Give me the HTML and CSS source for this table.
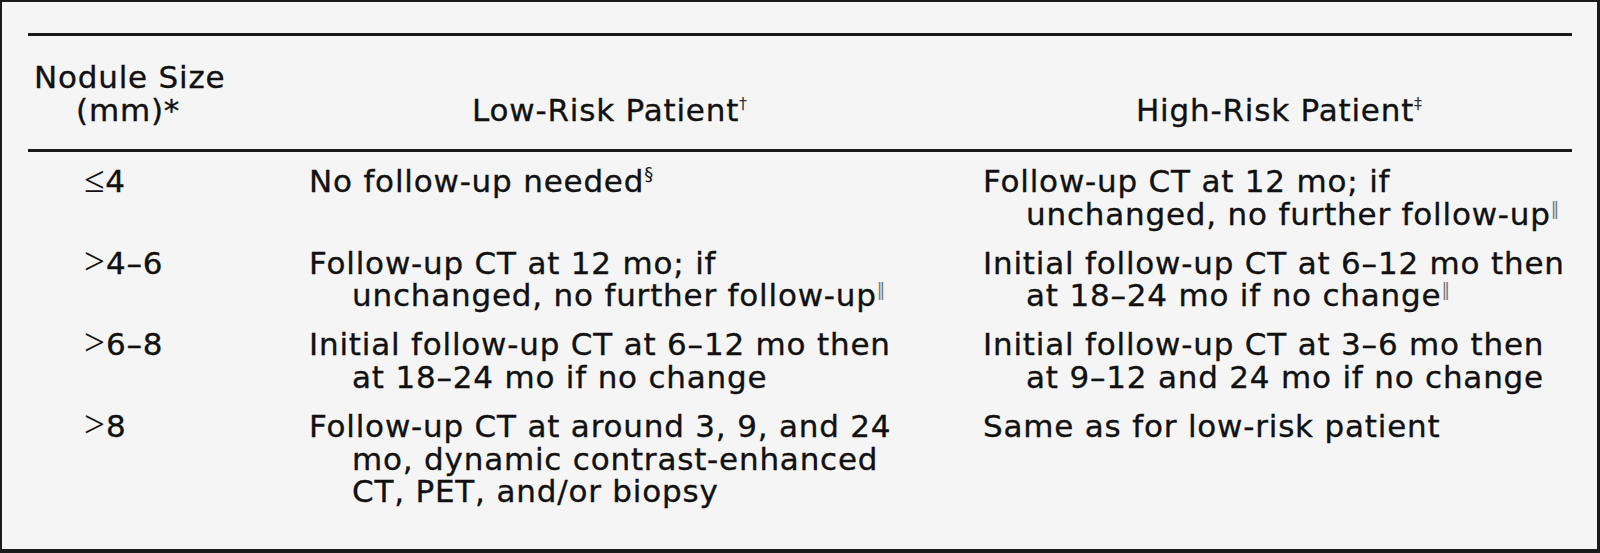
FILE: index.html
```html
<!DOCTYPE html>
<html lang="en">
<head>
<meta charset="utf-8">
<title>Nodule follow-up table</title>
<link rel="stylesheet" href="styles.css">
</head>
<body>
<div class="frame">
  <div class="table">
    <div class="head">
      <div class="cell c1 hang-head">Nodule Size<br>(mm)*</div>
      <div class="cell c2 h2">Low-Risk Patient<sup class="mark">†</sup></div>
      <div class="cell c3 h3">High-Risk Patient<sup class="mark">‡</sup></div>
    </div>
    <div class="body">
      <div class="row">
        <div class="cell size"><span class="sym">≤</span>4</div>
        <div class="cell hang">No follow-up needed<sup class="sect">§</sup></div>
        <div class="cell hang">Follow-up CT at 12 mo; if<br>unchanged, no further follow-up<sup class="bar">‖</sup></div>
      </div>
      <div class="row">
        <div class="cell size"><span class="sym">&gt;</span>4–6</div>
        <div class="cell hang">Follow-up CT at 12 mo; if<br>unchanged, no further follow-up<sup class="bar">‖</sup></div>
        <div class="cell hang">Initial follow-up CT at 6–12 mo then<br>at 18–24 mo if no change<sup class="bar">‖</sup></div>
      </div>
      <div class="row">
        <div class="cell size"><span class="sym">&gt;</span>6–8</div>
        <div class="cell hang">Initial follow-up CT at 6–12 mo then<br>at 18–24 mo if no change</div>
        <div class="cell hang">Initial follow-up CT at 3–6 mo then<br>at 9–12 and 24 mo if no change</div>
      </div>
      <div class="row">
        <div class="cell size"><span class="sym">&gt;</span>8</div>
        <div class="cell hang">Follow-up CT at around 3, 9, and 24<br>mo, dynamic contrast-enhanced<br>CT, PET, and/or biopsy</div>
        <div class="cell hang">Same as for low-risk patient</div>
      </div>
    </div>
  </div>
</div>
</body>
</html>
```

FILE: styles.css
```css
html, body {
  margin: 0;
  padding: 0;
  background: #f5f5f5;
}

.frame {
  width: 1600px;
  height: 553px;
  box-sizing: border-box;
  border-style: solid;
  border-color: #1b1b1b;
  border-width: 2px 3px 4px 2px;
  background: #f5f5f5;
  padding: 31px 25px 0 26px;
  color: #111;
  font-family: "DejaVu Sans", "Liberation Sans", sans-serif;
  font-size: 31px;
  letter-spacing: 0.8px;
  line-height: 32.6px;
  -webkit-text-stroke: 0.35px #111;
}

.head,
.row {
  display: grid;
  grid-template-columns: 281px 674px 1fr;
}

.head {
  align-items: end;
  border-top: 3px solid #1a1a1a;
  border-bottom: 3px solid #1a1a1a;
  padding: 25px 0 23px;
}

.cell {
  white-space: nowrap;
}

.hang-head {
  padding-left: 48px;
  text-indent: -42px;
}

.h2 {
  padding-left: 163px;
}

.h3 {
  padding-left: 153px;
}

.body {
  display: flex;
  flex-direction: column;
  gap: 16.4px;
  padding-top: 13px;
}

.size {
  padding-left: 56px;
}

.sym {
  font-family: "Liberation Serif", "DejaVu Serif", serif;
  font-size: 37px;
  line-height: 0;
  letter-spacing: 1px;
  -webkit-text-stroke: 0;
}

.hang {
  padding-left: 43px;
  text-indent: -43px;
}

sup {
  line-height: 0;
  letter-spacing: 0;
  -webkit-text-stroke: 0;
}

.mark {
  font-size: 16px;
  vertical-align: 12px;
  color: #333;
}

.sect {
  font-size: 18px;
  vertical-align: 12px;
}

.bar {
  font-size: 17px;
  vertical-align: 10px;
  color: #777;
  font-family: "DejaVu Sans", sans-serif;
}
```
